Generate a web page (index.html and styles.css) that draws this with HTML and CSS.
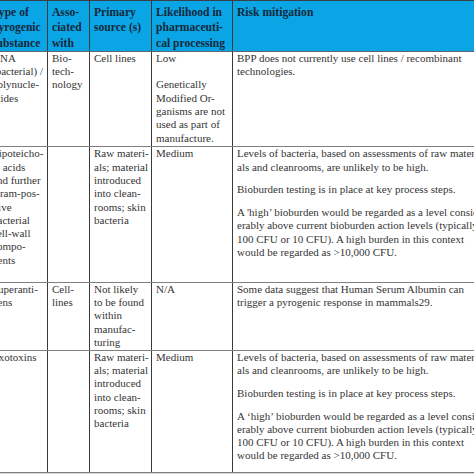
FILE: index.html
```html
<!DOCTYPE html>
<html>
<head>
<meta charset="utf-8">
<link rel="stylesheet" href="styles.css">
</head>
<body>
<div class="sheet">
<table class="risk">
<colgroup>
<col class="c1"><col class="c2"><col class="c3"><col class="c4"><col class="c5">
</colgroup>
<thead>
<tr class="head">
<th>Type of<br>pyrogenic<br>substance</th>
<th>Asso-<br>ciated<br>with</th>
<th>Primary<br>source (s)</th>
<th>Likelihood in<br>pharmaceuti-<br>cal processing</th>
<th>Risk mitigation</th>
</tr>
</thead>
<tbody>
<tr class="r1">
<td>DNA<br>(bacterial) /<br>polynucle-<br>otides</td>
<td>Bio-<br>tech-<br>nology</td>
<td>Cell lines</td>
<td><p>Low</p><p class="skip">Genetically<br>Modified Or-<br>ganisms are not<br>used as part of<br>manufacture.</p></td>
<td><p>BPP does not currently use cell lines / recombinant<br>technologies.</p></td>
</tr>
<tr class="r2">
<td>Lipoteicho-<br>ic acids<br>and further<br>Gram-pos-<br>itive<br>bacterial<br>cell-wall<br>compo-<br>nents</td>
<td></td>
<td>Raw materi-<br>als; material<br>introduced<br>into clean-<br>rooms; skin<br>bacteria</td>
<td>Medium</td>
<td><p>Levels of bacteria, based on assessments of raw materi-<br>als and cleanrooms, are unlikely to be high.</p><p class="para">Bioburden testing is in place at key process steps.</p><p class="para">A 'high’ bioburden would be regarded as a level consid-<br>erably above current bioburden action levels (typically<br>100 CFU or 10 CFU). A high burden in this context<br>would be regarded as &gt;10,000 CFU.</p></td>
</tr>
<tr class="r3">
<td>Superanti-<br>gens</td>
<td>Cell-<br>lines</td>
<td>Not likely<br>to be found<br>within<br>manufac-<br>turing</td>
<td>N/A</td>
<td><p>Some data suggest that Human Serum Albumin can<br>trigger a pyrogenic response in mammals29.</p></td>
</tr>
<tr class="r4">
<td>Exotoxins</td>
<td></td>
<td>Raw materi-<br>als; material<br>introduced<br>into clean-<br>rooms; skin<br>bacteria</td>
<td>Medium</td>
<td><p>Levels of bacteria, based on assessments of raw materi-<br>als and cleanrooms, are unlikely to be high.</p><p class="para">Bioburden testing is in place at key process steps.</p><p class="para">A ‘high’ bioburden would be regarded as a level consid-<br>erably above current bioburden action levels (typically<br>100 CFU or 10 CFU). A high burden in this context<br>would be regarded as &gt;10,000 CFU.</p></td>
</tr>
</tbody>
</table>
<div class="foot"></div>
</div>
</body>
</html>
```
FILE: styles.css
```css
html, body {
  margin: 0;
  padding: 0;
  background: #ffffff;
}
body {
  width: 474px;
  height: 474px;
  overflow: hidden;
  font-family: "Liberation Serif", "Times New Roman", serif;
}
.sheet {
  margin-left: -13px;
  width: 530px;
}
.risk {
  border-collapse: collapse;
  table-layout: fixed;
  width: 525px;
}
.c1 { width: 60px; }
.c2 { width: 42px; }
.c3 { width: 62px; }
.c4 { width: 81px; }
.c5 { width: 280px; }
.risk th, .risk td {
  font-family: "Liberation Serif", "Times New Roman", serif;
  text-align: left;
  vertical-align: top;
  white-space: nowrap;
  overflow: hidden;
  border-left: 1px solid #3a3a3a;
  border-right: 1px solid #3a3a3a;
  padding: 0 4px 0 4px;
}
.risk th {
  background: #0aa5e4;
  color: #16283c;
  font-weight: bold;
  font-size: 11.6px;
  line-height: 15.3px;
  padding-top: 4px;
  height: 45px;
  border-top: 1px solid #3a4048;
  border-bottom: 1px solid #5a6670;
}
.risk td {
  color: #353535;
  font-size: 11px;
  line-height: 13.3px;
  border-bottom: 1px solid #808080;
}
.risk p {
  margin: 0;
}
.risk p.para {
  margin-top: 9.4px;
}
.risk p.skip {
  margin-top: 13.3px;
}
.r1 td { height: 94.5px; }
.r2 td { height: 134.5px; }
.r3 td { height: 67px; }
.r4 td { height: 121px; }
.foot {
  height: 12px;
  background: #d6d6d6;
}
```
